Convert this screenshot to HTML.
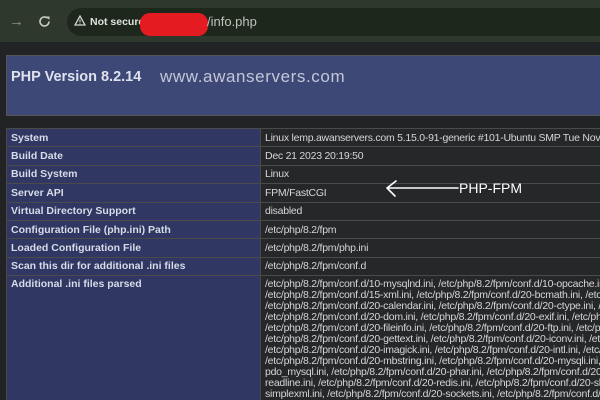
<!DOCTYPE html>
<html><head><style>
html,body{margin:0;width:600px;height:400px;overflow:hidden}
body{background:#222325;font-family:"Liberation Sans",sans-serif}
#w{position:relative;width:600px;height:400px;overflow:hidden}
.top{position:absolute;left:0;top:0;width:600px;height:42px;background:#2f382c}
.pill{position:absolute;left:67px;top:8px;width:533px;height:28px;border-radius:14px 0 0 14px;background:#1e271c}
.hdr{position:absolute;left:6px;top:55px;width:594px;height:61px;background:#3d4876;border:1px solid #555;border-right:none;box-sizing:border-box}
table{position:absolute;left:6px;top:128px;border-collapse:collapse;font-size:10.5px;table-layout:fixed;width:594px}
td{border:1px solid #4a4a4a;height:17.3px;padding:0 4px;white-space:nowrap;vertical-align:middle;overflow:hidden;box-sizing:border-box}
td.e{background:#2f3762;color:#d8dbe8;font-weight:bold}
td.v{background:#262729;color:#d6d6d6;letter-spacing:-0.25px;border-right:none}
tr{height:18.4px}
.big td{vertical-align:top;padding-top:3px;line-height:11px;border-bottom:none}
</style></head><body><div id="w">
<div class="top"></div>
<div class="pill"></div>
<div style="position:absolute;left:9px;top:13px;color:#8a9086;font-size:15px">→</div>
<svg style="position:absolute;left:38px;top:15px" width="13" height="13" viewBox="0 0 13 13"><path d="M11 6.5A4.5 4.5 0 1 1 9.5 3.1" fill="none" stroke="#c8ccc4" stroke-width="1.6"/><path d="M8 1.5h3.5V5z" fill="#c8ccc4"/></svg>
<svg style="position:absolute;left:74px;top:15px" width="12" height="11" viewBox="0 0 12 11"><path d="M6 1L11 10H1Z" fill="none" stroke="#d0d4cc" stroke-width="1.3"/><path d="M6 4.5v3M6 8.5v.8" stroke="#d0d4cc" stroke-width="1.1"/></svg>
<div style="position:absolute;left:90px;top:16px;color:#dfe3db;font-size:10.5px;font-weight:bold">Not secure</div>
<div style="position:absolute;left:140px;top:13px;width:68px;height:23px;background:#e51b22;border-radius:10px"></div>
<div style="position:absolute;left:207px;top:14px;color:#c0c4bc;font-size:13px">/info.php</div>
<div class="hdr"><span style="position:absolute;left:4px;top:13px;color:#dfe2ee;font-size:14.5px;font-weight:bold">PHP Version 8.2.14</span><span style="position:absolute;left:153px;top:11px;color:#c3c7d8;font-size:17px;letter-spacing:.6px">www.awanservers.com</span></div>
<table>
<colgroup><col style="width:254px"><col></colgroup>
<tr><td class="e">System</td><td class="v">Linux lemp.awanservers.com 5.15.0-91-generic #101-Ubuntu SMP Tue Nov 14</td></tr>
<tr><td class="e">Build Date</td><td class="v">Dec 21 2023 20:19:50</td></tr>
<tr><td class="e">Build System</td><td class="v">Linux</td></tr>
<tr><td class="e">Server API</td><td class="v">FPM/FastCGI</td></tr>
<tr><td class="e">Virtual Directory Support</td><td class="v">disabled</td></tr>
<tr><td class="e">Configuration File (php.ini) Path</td><td class="v">/etc/php/8.2/fpm</td></tr>
<tr><td class="e">Loaded Configuration File</td><td class="v">/etc/php/8.2/fpm/php.ini</td></tr>
<tr><td class="e">Scan this dir for additional .ini files</td><td class="v">/etc/php/8.2/fpm/conf.d</td></tr>
<tr class="big"><td class="e">Additional .ini files parsed</td><td class="v" style="height:124px">/etc/php/8.2/fpm/conf.d/10-mysqlnd.ini, /etc/php/8.2/fpm/conf.d/10-opcache.ini,<br>/etc/php/8.2/fpm/conf.d/15-xml.ini, /etc/php/8.2/fpm/conf.d/20-bcmath.ini, /etc/php<br>/etc/php/8.2/fpm/conf.d/20-calendar.ini, /etc/php/8.2/fpm/conf.d/20-ctype.ini, /etc<br>/etc/php/8.2/fpm/conf.d/20-dom.ini, /etc/php/8.2/fpm/conf.d/20-exif.ini, /etc/php<br>/etc/php/8.2/fpm/conf.d/20-fileinfo.ini, /etc/php/8.2/fpm/conf.d/20-ftp.ini, /etc/php<br>/etc/php/8.2/fpm/conf.d/20-gettext.ini, /etc/php/8.2/fpm/conf.d/20-iconv.ini, /etc<br>/etc/php/8.2/fpm/conf.d/20-imagick.ini, /etc/php/8.2/fpm/conf.d/20-intl.ini, /etc/p<br>/etc/php/8.2/fpm/conf.d/20-mbstring.ini, /etc/php/8.2/fpm/conf.d/20-mysqli.ini, /et<br>pdo_mysql.ini, /etc/php/8.2/fpm/conf.d/20-phar.ini, /etc/php/8.2/fpm/conf.d/20-<br>readline.ini, /etc/php/8.2/fpm/conf.d/20-redis.ini, /etc/php/8.2/fpm/conf.d/20-sh<br>simplexml.ini, /etc/php/8.2/fpm/conf.d/20-sockets.ini, /etc/php/8.2/fpm/conf.d/20</td></tr>
</table>
<svg style="position:absolute;left:384px;top:177px" width="76" height="22" viewBox="0 0 76 22"><path d="M3 11H74M3 11L12 4M3 11L11 19" fill="none" stroke="#fff" stroke-width="1.6" stroke-linecap="round"/></svg>
<div style="position:absolute;left:459px;top:180px;color:#fff;font-size:14px">PHP-FPM</div>
</div></body></html>
